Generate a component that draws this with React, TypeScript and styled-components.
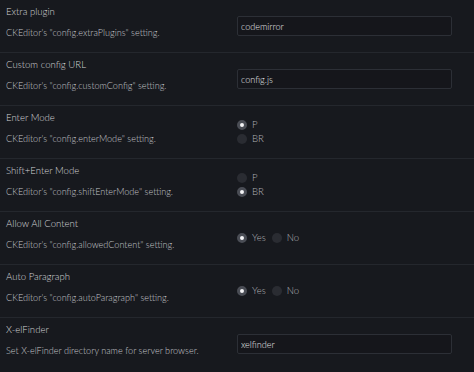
import React from "react";
import styled, { createGlobalStyle } from "styled-components";

const Global = createGlobalStyle`
  html, body {
    margin: 0;
    padding: 0;
    background: #17191e;
  }
  body {
    font-family: Lato, "Liberation Sans", sans-serif;
  }
`;

type Setting =
  | { label: string; desc: string; kind: "text"; value: string }
  | { label: string; desc: string; kind: "stack"; options: string[]; checked: number }
  | { label: string; desc: string; kind: "inline"; options: string[]; checked: number };

const settings: Setting[] = [
  { label: "Extra plugin", desc: `CKEditor's "config.extraPlugins" setting.`, kind: "text", value: "codemirror" },
  { label: "Custom config URL", desc: `CKEditor's "config.customConfig" setting.`, kind: "text", value: "config.js" },
  { label: "Enter Mode", desc: `CKEditor's "config.enterMode" setting.`, kind: "stack", options: ["P", "BR"], checked: 0 },
  { label: "Shift+Enter Mode", desc: `CKEditor's "config.shiftEnterMode" setting.`, kind: "stack", options: ["P", "BR"], checked: 1 },
  { label: "Allow All Content", desc: `CKEditor's "config.allowedContent" setting.`, kind: "inline", options: ["Yes", "No"], checked: 0 },
  { label: "Auto Paragraph", desc: `CKEditor's "config.autoParagraph" setting.`, kind: "inline", options: ["Yes", "No"], checked: 0 },
  { label: "X-elFinder", desc: "Set X-elFinder directory name for server browser.", kind: "text", value: "xelfinder" },
];

export default function App() {
  return (
    <>
      <Global />
      <List>
        {settings.map((s) => (
          <Row key={s.label}>
            <Info>
              <Label>{s.label}</Label>
              <Desc>{s.desc}</Desc>
            </Info>
            <Control>
              {s.kind === "text" && <TextInput defaultValue={s.value} />}
              {s.kind !== "text" && (
                <RadioGroup $inline={s.kind === "inline"}>
                  {s.options.map((o, i) => (
                    <Option key={o}>
                      <Radio $checked={i === s.checked} />
                      <OptionText>{o}</OptionText>
                    </Option>
                  ))}
                </RadioGroup>
              )}
            </Control>
          </Row>
        ))}
      </List>
    </>
  );
}

const List = styled.div`
  width: 474px;
  display: flex;
  flex-direction: column;
`;

const Row = styled.div`
  display: grid;
  grid-template-columns: 237px 1fr;
  border-bottom: 1px solid #24272d;
  &:last-child {
    border-bottom: none;
  }
`;

const Info = styled.div`
  padding: 5px 6px 12px;
`;

const Label = styled.div`
  font-size: 9.6px;
  line-height: 14px;
  font-weight: 300;
  color: #d2d3d6;
`;

const Desc = styled.div`
  margin-top: 7px;
  font-size: 9.1px;
  line-height: 14px;
  font-weight: 300;
  color: #c3c5c9;
  white-space: nowrap;
`;

const Control = styled.div`
  display: flex;
  align-items: center;
  padding-right: 22px;
`;

const TextInput = styled.input`
  width: 100%;
  height: 20px;
  box-sizing: border-box;
  background: #15161b;
  border: 1px solid #2c2f36;
  border-radius: 2px;
  padding: 0 3px;
  font-family: Lato, "Liberation Sans", sans-serif;
  font-size: 9.1px;
  font-weight: 300;
  color: #e6e7ea;
  outline: none;
`;

const RadioGroup = styled.div<{ $inline: boolean }>`
  display: flex;
  flex-direction: ${(p) => (p.$inline ? "row" : "column")};
  gap: ${(p) => (p.$inline ? "6px" : "2px")};
`;

const Option = styled.div`
  display: flex;
  align-items: center;
  gap: 5px;
`;

const Radio = styled.span<{ $checked: boolean }>`
  width: 10px;
  height: 10px;
  border-radius: 50%;
  box-sizing: border-box;
  background: ${(p) => (p.$checked ? "#f4f4f6" : "#2a2c32")};
  border: ${(p) => (p.$checked ? "3px solid #4a4d55" : "none")};
`;

const OptionText = styled.span`
  font-size: 9.6px;
  line-height: 12px;
  font-weight: 300;
  color: #b0b2b7;
`;
